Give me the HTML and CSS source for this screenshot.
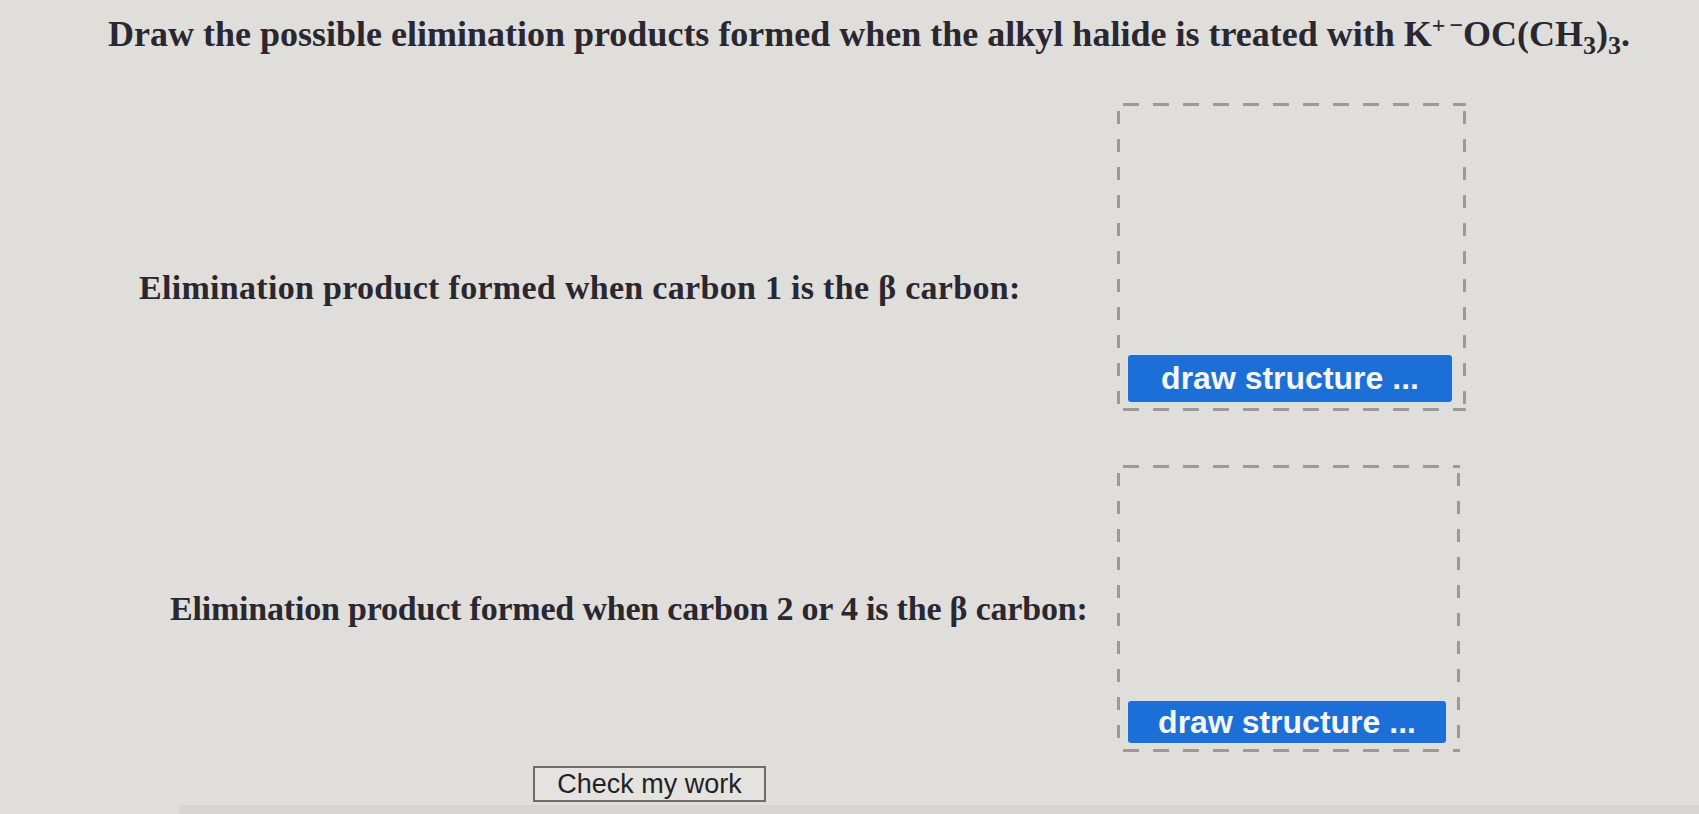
FILE: index.html
```html
<!DOCTYPE html>
<html lang="en">
<head>
<meta charset="utf-8">
<title>Elimination products</title>
<link rel="stylesheet" href="styles.css">
</head>
<body>
<div class="page">
  <h1 class="question">Draw the possible elimination products formed when the alkyl halide is treated with K<sup>+</sup><sup class="minus">&minus;</sup>OC(CH<sub>3</sub>)<sub>3</sub>.</h1>

  <div class="row row-1">
    <div class="label label-1">Elimination product formed when carbon 1 is the &beta; carbon:</div>
    <div class="box box-1">
      <button class="draw-btn draw-btn-1">draw structure ...</button>
    </div>
  </div>

  <div class="row row-2">
    <div class="label label-2">Elimination product formed when carbon 2 or 4 is the &beta; carbon:</div>
    <div class="box box-2">
      <button class="draw-btn draw-btn-2">draw structure ...</button>
    </div>
  </div>

  <div class="actions">
    <button class="check-btn">Check my work</button>
  </div>
  <div class="bottom-strip"></div>
</div>
</body>
</html>
```
FILE: styles.css
```css
html, body {
  margin: 0;
  padding: 0;
  height: 100%;
  overflow: hidden;
}
body {
  background: #dfdedb;
  font-family: "Liberation Serif", "Times New Roman", serif;
  color: #2a2730;
}
.page {
  display: flex;
  flex-direction: column;
  height: 814px;
}
.question {
  margin: 0;
  padding: 13px 0 0 108px;
  height: 43px;
  font-size: 36px;
  line-height: 43px;
  font-weight: bold;
  white-space: nowrap;
}
.question sup {
  font-size: 24px;
  line-height: 0;
  vertical-align: 13px;
}
.question sup.minus {
  margin-left: 4px;
}
.question sub {
  font-size: 26px;
  line-height: 0;
  vertical-align: -8px;
}
.row {
  display: grid;
  grid-template-columns: 1117px auto;
  align-items: start;
}
.row-1 {
  margin-top: 47px;
}
.row-2 {
  margin-top: 54px;
}
.label {
  font-size: 34px;
  line-height: 40px;
  font-weight: bold;
  white-space: nowrap;
}
.label-1 {
  padding: 165px 0 0 139px;
  letter-spacing: 0.3px;
}
.label-2 {
  padding: 124px 0 0 170px;
  letter-spacing: -0.2px;
}
.box {
  box-sizing: border-box;
  display: flex;
  flex-direction: column;
  justify-content: flex-end;
  padding: 0 14px 9px 11px;
  background:
    repeating-linear-gradient(90deg, #9d9994 0 16px, transparent 16px 30px) left 6px top / 100% 3px no-repeat,
    repeating-linear-gradient(90deg, #9d9994 0 16px, transparent 16px 30px) left 6px bottom / 100% 3px no-repeat,
    repeating-linear-gradient(180deg, #9d9994 0 13px, transparent 13px 28px) left top 8px / 3px 100% no-repeat,
    repeating-linear-gradient(180deg, #9d9994 0 13px, transparent 13px 28px) right top 8px / 3px 100% no-repeat;
}
.box-1 {
  width: 349px;
  height: 308px;
}
.box-2 {
  width: 343px;
  height: 287px;
}
.draw-btn {
  display: block;
  width: 100%;
  border: none;
  border-radius: 3px;
  background: #1c6fd6;
  color: #f4f6fa;
  font-family: "Liberation Sans", Arial, sans-serif;
  font-weight: bold;
  font-size: 32px;
  padding: 0;
  text-align: center;
  box-shadow: 0 0 0 1px #d7e3f2;
}
.draw-btn-1 {
  height: 47px;
}
.draw-btn-2 {
  height: 42px;
}
.actions {
  height: 39px;
  padding: 14px 0 0 533px;
}
.check-btn {
  box-sizing: border-box;
  width: 233px;
  height: 36px;
  border: 2px solid #6d6c6a;
  background: #e4e3e0;
  color: #232226;
  font-family: "Liberation Sans", Arial, sans-serif;
  font-size: 27px;
  padding: 0;
  line-height: 30px;
}
.bottom-strip {
  flex: 1;
  margin-left: 179px;
  background: #d6d5d2;
}
```
